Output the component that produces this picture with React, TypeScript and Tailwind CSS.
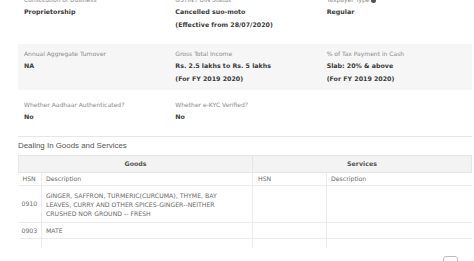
const verdana = { fontFamily: '"DejaVu Sans", Verdana, sans-serif' };

type Field = { label: string; values: string[] };

const rows: Field[][] = [
  [
    { label: "Constitution of Business", values: ["Proprietorship"] },
    { label: "GSTIN / UIN Status", values: ["Cancelled suo-moto", "(Effective from 28/07/2020)"] },
    { label: "Taxpayer Type", values: ["Regular"] },
  ],
  [
    { label: "Annual Aggregate Turnover", values: ["NA"] },
    { label: "Gross Total Income", values: ["Rs. 2.5 lakhs to Rs. 5 lakhs", "(For FY 2019 2020)"] },
    { label: "% of Tax Payment in Cash", values: ["Slab: 20% & above", "(For FY 2019 2020)"] },
  ],
  [
    { label: "Whether Aadhaar Authenticated?", values: ["No"] },
    { label: "Whether e-KYC Verified?", values: ["No"] },
    { label: "", values: [] },
  ],
];

function InfoRow({ fields, className }: { fields: Field[]; className: string }) {
  return (
    <div className={`grid grid-cols-3 ${className}`}>
      {fields.map((f, i) => (
        <div key={i} className="px-[6px]">
          <div className="h-[13px] leading-[13px] text-[6px] text-[#8a8a8a] whitespace-nowrap">
            {f.label}
            {f.label === "Taxpayer Type" && (
              <span className="ml-[2px] inline-block w-[5px] h-[5px] rounded-full bg-[#555] align-middle" />
            )}
          </div>
          {f.values.map((v) => (
            <div key={v} className="h-[12.5px] leading-[12.5px] text-[6.3px] font-bold text-[#3a3a3a] whitespace-nowrap">
              {v}
            </div>
          ))}
        </div>
      ))}
    </div>
  );
}

export default function App() {
  return (
    <div className="relative w-[474px] h-[261px] overflow-hidden bg-white" style={verdana}>
      <div className="pl-[18px] pr-[2px] -mt-[11px]">
        <InfoRow fields={rows[0]} className="h-[55px] pt-[4px]" />
        <InfoRow fields={rows[1]} className="h-[46px] pt-[3px] bg-[#f6f6f6]" />
        <InfoRow fields={rows[2]} className="h-[47px] pt-[8px] border-b border-[#e6e6e6]" />

        <div
          className="h-[18px] leading-[18px] text-[7.9px] text-[#555]"
          style={{ fontFamily: '"Liberation Sans", Arial, sans-serif' }}
        >
          Dealing In Goods and Services
        </div>

        <table className="w-full border-collapse text-[6.2px] text-[#6a6a6a] table-fixed">
          <colgroup>
            <col className="w-[23px]" />
            <col className="w-[211px]" />
            <col className="w-[74px]" />
            <col />
          </colgroup>
          <thead>
            <tr className="h-[17px] bg-[#f3f3f3]">
              <th colSpan={2} className="border border-[#e6e6e6] font-bold text-[6.3px] text-[#555]">
                Goods
              </th>
              <th colSpan={2} className="border border-[#e6e6e6] font-bold text-[6.3px] text-[#555]">
                Services
              </th>
            </tr>
          </thead>
          <tbody>
            <tr className="h-[13px]">
              <td className="pl-[4px] border-b border-r border-[#ececec]">HSN</td>
              <td className="pl-[4px] border-b border-r border-[#ececec]">Description</td>
              <td className="pl-[5px] border-b border-r border-[#ececec]">HSN</td>
              <td className="pl-[4px] border-b border-[#ececec]">Description</td>
            </tr>
            <tr className="h-[37px]">
              <td className="pl-[3px] border-b border-r border-[#ececec]">0910</td>
              <td className="pl-[4px] border-b border-r border-[#ececec] leading-[9px] whitespace-nowrap">
                GINGER, SAFFRON, TURMERIC(CURCUMA), THYME, BAY
                <br />
                LEAVES, CURRY AND OTHER SPICES-GINGER--NEITHER
                <br />
                CRUSHED NOR GROUND -- FRESH
              </td>
              <td className="border-b border-r border-[#ececec]" />
              <td className="border-b border-[#ececec]" />
            </tr>
            <tr className="h-[16px]">
              <td className="pl-[3px] border-b border-r border-[#ececec]">0903</td>
              <td className="pl-[4px] border-b border-r border-[#ececec]">MATE</td>
              <td className="border-b border-r border-[#ececec]" />
              <td className="border-b border-[#ececec]" />
            </tr>
            <tr className="h-[9px]">
              <td className="border-r border-[#ececec]" />
              <td className="border-r border-[#ececec]" />
              <td className="border-r border-[#ececec]" />
              <td />
            </tr>
          </tbody>
        </table>
      </div>

      <div className="absolute left-[443px] top-[256px] w-[15px] h-[12px] rounded-[3px] border border-[#bbb] bg-white" />
    </div>
  );
}
